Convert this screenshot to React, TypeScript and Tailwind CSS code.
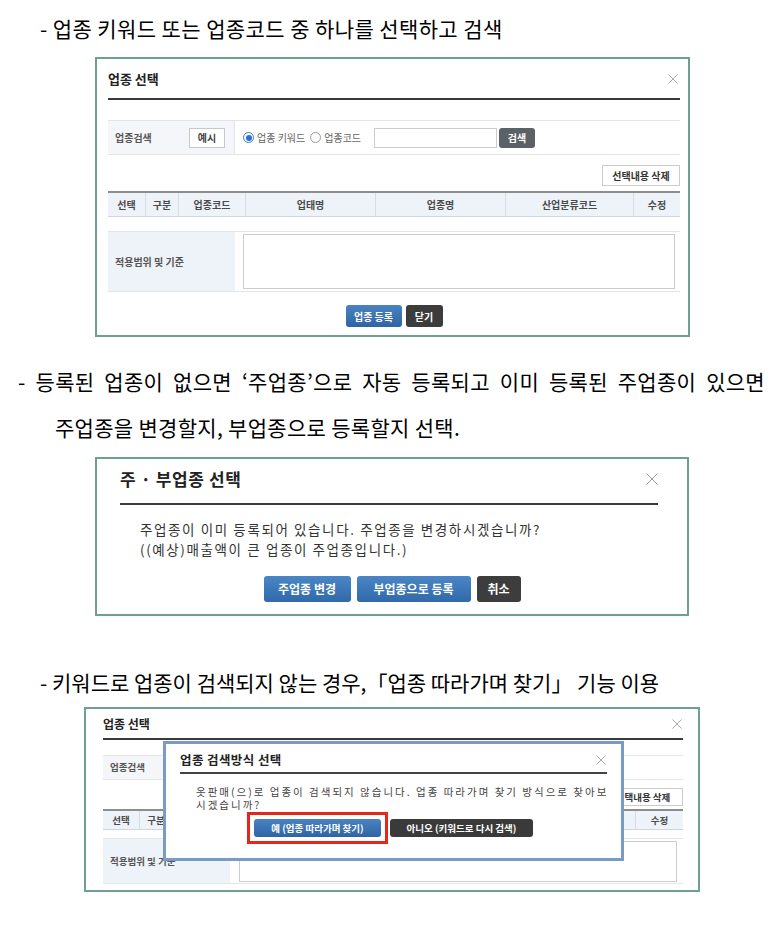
import type { ReactNode } from 'react';

const KR = "font-['Noto_Sans_CJK_KR',sans-serif]";

function CloseX({ size, color }: { size: number; color: string }) {
    return (
        <svg width={size} height={size} viewBox="0 0 12 12" fill="none">
            <path d="M0.5 0.5L11.5 11.5M11.5 0.5L0.5 11.5" stroke={color} strokeWidth="1" />
        </svg>
    );
}

function Radio({ checked }: { checked?: boolean }) {
    return checked ? (
        <span className="flex h-[11px] w-[11px] shrink-0 items-center justify-center rounded-full border border-[#3a7bd5] bg-white">
            <span className="h-[6px] w-[6px] rounded-full bg-[#2a70d8]" />
        </span>
    ) : (
        <span className="block h-[11px] w-[11px] shrink-0 rounded-full border border-[#9a9a9a] bg-white" />
    );
}

const columns = ['선택', '구분', '업종코드', '업태명', '업종명', '산업분류코드', '수정'];

function TableHead({ widths, height, size, labels = columns }: { widths: number[]; height: string; size: string; labels?: string[] }) {
    return (
        <div className={`flex ${height} border-t-2 border-b border-t-[#8d8d8d] border-b-[#cfd5df] bg-[#eef2f9]`}>
            {labels.map((c, i) => (
                <div
                    key={i}
                    style={{ width: widths[i] }}
                    className={`flex items-center justify-center font-bold text-[#4a4a4a] ${size} ${i > 0 ? 'border-l border-[#d6dce6]' : ''}`}
                >
                    {c}
                </div>
            ))}
        </div>
    );
}

function Btn({ children, className }: { children: ReactNode; className: string }) {
    return <span className={`flex items-center justify-center rounded-[3px] font-bold text-white ${className}`}>{children}</span>;
}

export default function App() {
    return (
        <div className={`w-[783px] bg-white pt-[14px] pb-[40px] text-black ${KR}`}>
            <p className="ml-[40px] text-[21px] leading-[29px] tracking-[0.4px]">- 업종 키워드 또는 업종코드 중 하나를 선택하고 검색</p>

            {/* dialog 1 */}
            <div className="ml-[95px] mt-[14px] h-[280px] w-[595px] border-2 border-[#6f9f8f] pl-[11px] pr-[8px]">
                <div className="flex h-[41px] items-center justify-between border-b-2 border-[#3a3a3a] pr-[2px]">
                    <span className="text-[13px] font-bold text-[#222]">업종 선택</span>
                    <CloseX size={10} color="#999" />
                </div>
                <div className="mt-[20px] flex h-[35px] border-y border-[#e4e4e4]">
                    <div className="flex w-[127px] items-center justify-between border-r border-[#e4e4e4] bg-[#f5f6f9] pl-[7px] pr-[9px]">
                        <span className="text-[10px] font-bold text-[#555]">업종검색</span>
                        <span className="flex h-[20px] w-[36px] items-center justify-center border border-[#c8c8c8] bg-white text-[10px] font-bold text-[#444]">예시</span>
                    </div>
                    <div className="flex items-center pl-[8px]">
                        <div className="flex w-[131px] items-center text-[10px] text-[#666]">
                            <Radio checked />
                            <span className="ml-[3px]">업종 키워드</span>
                            <span className="ml-[5px]">
                                <Radio />
                            </span>
                            <span className="ml-[3px]">업종코드</span>
                        </div>
                        <span className="h-[20px] w-[123px] border border-[#cccccc] bg-white" />
                        <Btn className="ml-[2px] h-[20px] w-[36px] bg-[#5b6167] text-[10px]">검색</Btn>
                    </div>
                </div>
                <div className="mt-[10px] flex justify-end">
                    <span className="flex h-[21px] w-[78px] items-center justify-center border border-[#cccccc] bg-white text-[10px] font-bold text-[#333]">선택내용 삭제</span>
                </div>
                <div className="mt-[5px]">
                    <TableHead widths={[37, 33, 67, 130, 130, 128, 47]} height="h-[26px]" size="text-[10px]" />
                </div>
                <div className="h-[14px]" />
                <div className="flex h-[61px] border-y border-[#e4e4e4]">
                    <div className="flex w-[127px] items-center bg-[#eef2f9] pl-[7px] text-[10px] font-bold text-[#555]">적용범위 및 기준</div>
                    <div className="pl-[8px] pt-[2px]">
                        <div className="h-[55px] w-[432px] border border-[#cccccc] bg-white" />
                    </div>
                </div>
                <div className="mt-[13px] flex justify-center gap-[4px]">
                    <Btn className="h-[22px] w-[56px] bg-linear-to-b from-[#4a83c2] to-[#2f64a3] text-[10px]">업종 등록</Btn>
                    <Btn className="h-[22px] w-[37px] bg-[#3c3c3c] text-[10px]">닫기</Btn>
                </div>
            </div>

            <p className="ml-[18px] mt-[30px] w-[747px] text-justify text-[21px] leading-[29px] tracking-[0.3px] [text-align-last:justify]">
                - 등록된 업종이 없으면 ‘주업종’으로 자동 등록되고 이미 등록된 주업종이 있으면
            </p>
            <p className="ml-[55px] mt-[17px] text-[21px] leading-[29px] tracking-[0.3px]">주업종을 변경할지, 부업종으로 등록할지 선택.</p>

            {/* dialog 2 */}
            <div className="ml-[95px] mt-[15px] h-[159px] w-[594px] border-2 border-[#6f9f8f] pl-[23px] pr-[29px]">
                <div className="flex h-[46px] items-center justify-between border-b-2 border-[#3a3a3a] pb-[4px]">
                    <span className="text-[17px] font-bold tracking-[0.6px] text-[#222]">주 · 부업종 선택</span>
                    <CloseX size={12} color="#9a9a9a" />
                </div>
                <div className="mt-[14px] pl-[20px] text-[13.5px] leading-[20px] tracking-[1.6px] text-[#333]">
                    <p className="whitespace-nowrap">주업종이 이미 등록되어 있습니다. 주업종을 변경하시겠습니까?</p>
                    <p className="whitespace-nowrap">((예상)매출액이 큰 업종이 주업종입니다.)</p>
                </div>
                <div className="mt-[17px] flex justify-center gap-[6px] pl-[6px]">
                    <Btn className="h-[26px] w-[87px] bg-linear-to-b from-[#4a86c6] to-[#3169aa] text-[12px]">주업종 변경</Btn>
                    <Btn className="h-[26px] w-[114px] bg-linear-to-b from-[#4a86c6] to-[#3169aa] text-[12px]">부업종으로 등록</Btn>
                    <Btn className="h-[26px] w-[44px] bg-[#3d3d3d] text-[12px]">취소</Btn>
                </div>
            </div>

            <p className="ml-[40px] mt-[52px] text-[21px] leading-[29px]">- 키워드로 업종이 검색되지 않는 경우,「업종 따라가며 찾기」 기능 이용</p>

            {/* dialog 3 */}
            <div className="relative ml-[84px] mt-[10px] h-[185px] w-[616px] border-2 border-[#6f9f8f] pl-[17px] pr-[15px]">
                <div className="flex h-[31px] items-center justify-between border-b-2 border-[#3a3a3a] pr-[1px]">
                    <span className="text-[12px] font-bold text-[#222]">업종 선택</span>
                    <CloseX size={10} color="#999" />
                </div>
                <div className="mt-[15px] flex h-[25px] border-y border-[#e6e6e6]">
                    <div className="flex w-[127px] items-center bg-[#f5f6f9] pl-[7px] text-[9.5px] font-bold text-[#555]">업종검색</div>
                </div>
                <div className="mt-[8px] flex justify-end">
                    <span className="flex h-[18px] w-[80px] items-center justify-center border border-[#cccccc] bg-white text-[9.5px] font-bold text-[#333]">선택내용 삭제</span>
                </div>
                <div className="mt-[3px]">
                    <TableHead
                        widths={[36, 33, 68, 132, 132, 131, 48]}
                        height="h-[21px]"
                        size="text-[9.5px]"
                        labels={['선택', '구분', '', '', '', '', '수정']}
                    />
                </div>
                <div className="h-[8px]" />
                <div className="flex h-[46px] border-y border-[#e6e6e6]">
                    <div className="flex w-[127px] items-center bg-[#eef2f9] pl-[7px] text-[9.5px] font-bold text-[#555]">적용범위 및 기준</div>
                    <div className="pl-[9px] pt-[2px]">
                        <div className="h-[41px] w-[438px] border border-[#cccccc] bg-white" />
                    </div>
                </div>

                {/* overlay: 검색방식 선택 */}
                <div className="absolute left-[77px] top-[32px] h-[120px] w-[461px] border-[3px] border-[#7a9bc5] bg-white px-[14px]">
                    <div className="flex h-[30px] items-center justify-between border-b-2 border-[#444] pt-[4px] pr-[1px]">
                        <span className="text-[12.5px] font-bold tracking-[0.4px] text-[#222]">업종 검색방식 선택</span>
                        <CloseX size={10} color="#999" />
                    </div>
                    <div className="mt-[11px] pl-[16px] text-[10.5px] leading-[13px] tracking-[2px] text-[#444]">
                        <p className="whitespace-nowrap">옷판매(으)로 업종이 검색되지 않습니다. 업종 따라가며 찾기 방식으로 찾아보</p>
                        <p className="whitespace-nowrap">시겠습니까?</p>
                    </div>
                    <div className="ml-[67px] mt-[1px] flex items-center">
                        <div className="border-[3px] border-[#e6261b] px-[4px] py-[4px]">
                            <Btn className="h-[18px] w-[127px] bg-linear-to-b from-[#4a83c2] to-[#2f64a3] text-[9.5px]">예 (업종 따라가며 찾기)</Btn>
                        </div>
                        <Btn className="ml-[2px] h-[18px] w-[143px] bg-[#3a3a3a] text-[9.5px]">아니오 (키워드로 다시 검색)</Btn>
                    </div>
                </div>
            </div>
        </div>
    );
}
